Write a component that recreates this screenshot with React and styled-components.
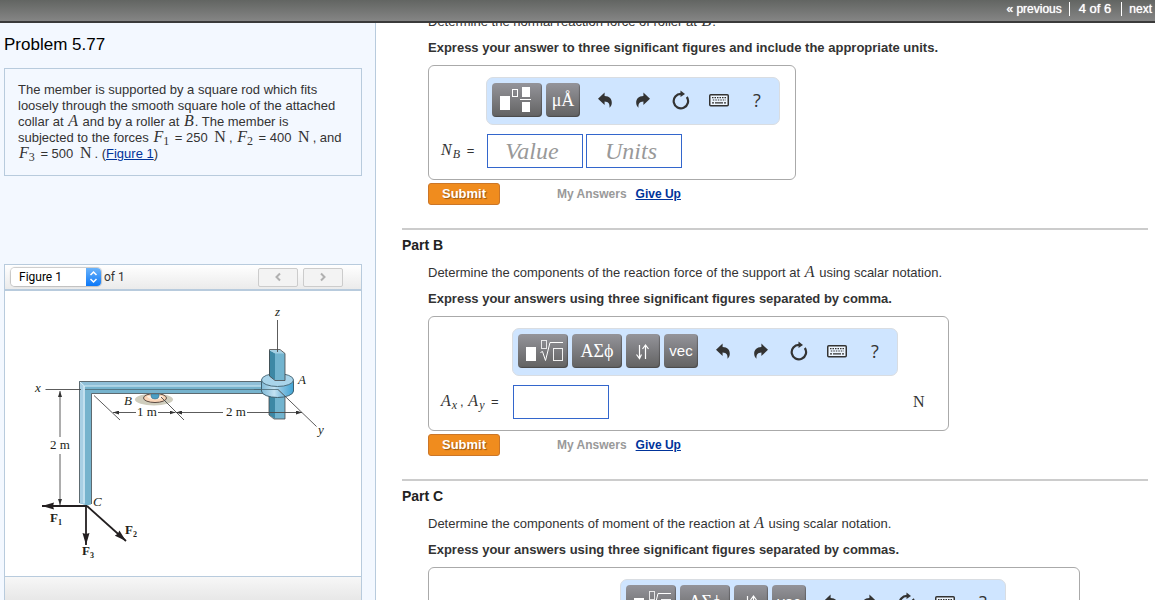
import React from "react";
import styled, { createGlobalStyle, ThemeProvider } from "styled-components";

const theme = {
  color: {
    text: "#333333",
    link: "#00339a",
    muted: "#999999",
    pane: "#f3f8ff",
    paneBorder: "#b8cbdd",
    toolbar: "#cfe5ff",
    field: "#3366cc",
    submit: "#f08c1e",
  },
  font: {
    sans: '"Liberation Sans", Arial, sans-serif',
    math: '"Liberation Serif", "Times New Roman", serif',
    control: 'Roboto, "Liberation Sans", sans-serif',
  },
};

const GlobalStyle = createGlobalStyle`
  * {
    box-sizing: border-box;
  }
  body {
    margin: 0;
    background: #ffffff;
    color: ${theme.color.text};
    font: 13px/16px ${theme.font.sans};
  }
  h1, h2, p {
    margin: 0;
  }
`;

/* Icons */

const ReplyArrow = ({ flip }) => (
  <svg width="14" height="16" viewBox="0 0 14 16" aria-hidden="true">
    <path
      fill="#333"
      transform={flip ? "matrix(-1 0 0 1 14 0)" : undefined}
      d="M0 6.8 6.6 0.6V4C11.5 4.2 14 7 13.8 11c-.1 2-1 3.700-2.300 4.800C11.900 12 10.600 9.800 6.600 9.600v3.500Z"
    />
  </svg>
);

const ResetIcon = () => (
  <svg width="18" height="20" viewBox="0 0 18 20" aria-hidden="true">
    <path
      d="M14.800 7A7.200 7.200 0 1 1 9 3.900"
      fill="none"
      stroke="#333"
      strokeWidth="2.200"
    />
    <path d="M8.500 0.500 13 3.900 8.500 7Z" fill="#333" />
  </svg>
);

const KeyboardIcon = () => (
  <svg width="20" height="14" viewBox="0 0 20 14" aria-hidden="true">
    <rect x="0.750" y="1.750" width="18.500" height="11" rx="1" fill="#eef6ff" stroke="#333" strokeWidth="1.500" />
    <g stroke="#333" strokeWidth="1.200">
      <path d="M3 4.600h14" strokeDasharray="1.500 1" />
      <path d="M3.800 7h13" strokeDasharray="1.500 1" />
      <path d="M3 9.800h2M6 9.800h8M15 9.800h2" />
    </g>
  </svg>
);

const FractionIcon = () => (
  <svg width="50" height="34" viewBox="0 0 50 34" aria-hidden="true">
    <g fill="#fff">
      <rect x="8" y="13" width="10" height="14" />
      <rect x="30" y="4" width="8" height="10" />
      <rect x="28" y="16" width="11" height="1" />
      <rect x="30" y="19" width="8" height="10" />
    </g>
    <rect x="20.500" y="6.500" width="5" height="7" fill="none" stroke="#fff" />
  </svg>
);

const RootIcon = () => (
  <svg width="50" height="34" viewBox="0 0 50 34" aria-hidden="true">
    <rect x="8" y="13" width="10" height="14" fill="#fff" />
    <g fill="none" stroke="#fff">
      <rect x="23.500" y="6.500" width="5" height="8" opacity=".8" />
      <path d="M22.500 18.500 24.500 17.500 27.500 26.500 32 8.500H45" />
      <rect x="35.500" y="14.500" width="9" height="12" opacity=".9" />
    </g>
  </svg>
);

const UpDownIcon = () => (
  <svg width="34" height="34" viewBox="0 0 34 34" aria-hidden="true">
    <g fill="none" stroke="#fff" strokeWidth="1.200">
      <path d="M13.500 11V24.500M10.500 20.500 13.500 24.500 15.500 20.500" />
      <path d="M19.500 25V11.500M16.500 15 19.500 11 22.500 15" />
    </g>
  </svg>
);

/* Math text */

const Var = styled.var`
  margin: 0 1px;
  font: italic 16px/1 ${(p) => p.theme.font.math};
  line-height: 0;

  sub {
    margin: ${(p) => (p.$numeric ? "0 1px 0 0" : "0 2px 0 1px")};
    font-size: 12px;
    line-height: 0;
    vertical-align: -3px;
    font-style: ${(p) => (p.$numeric ? "normal" : "italic")};
  }
`;

const Unit = styled.span`
  margin: 0 3px;
  font-family: ${(p) => p.theme.font.math};
  font-size: 16px;
  line-height: 0;
`;

/* Answer toolbar */

const Toolbar = styled.div`
  display: flex;
  align-items: center;
  gap: 4px;
  height: 48px;
  padding: 0 4px 2px 5px;
  background: ${(p) => p.theme.color.toolbar};
  border: 1px solid #d9dde2;
  border-radius: 7px;
`;

const TemplateButton = styled.button`
  display: flex;
  align-items: center;
  justify-content: center;
  width: ${(p) => (p.$wide ? 50 : 34)}px;
  height: 34px;
  padding: 0;
  border: 0;
  border-radius: 4px;
  background: linear-gradient(#94949a, #626262);
  box-shadow: inset -1px -1px 1px rgba(0, 0, 0, 0.25);
  color: #ffffff;
  font: ${(p) =>
    p.$math ? `18px/34px ${p.theme.font.math}` : `15px/34px ${p.theme.font.sans}`};

  svg {
    flex: none;
  }
`;

const Tools = styled.div`
  display: flex;
  margin-left: 1px;
`;

const ToolButton = styled.button`
  display: flex;
  align-items: center;
  justify-content: center;
  width: 38px;
  height: 34px;
  padding: 0 0 0 2px;
  border: 0;
  background: none;
  color: #333333;
  font: 18px/34px "Open Sans", sans-serif;
`;

const AnswerToolbar = ({ variant }) => (
  <Toolbar>
    {variant === "units" ? (
      <>
        <TemplateButton $wide aria-label="Templates">
          <FractionIcon />
        </TemplateButton>
        <TemplateButton $math>μÅ</TemplateButton>
      </>
    ) : (
      <>
        <TemplateButton $wide aria-label="Templates">
          <RootIcon />
        </TemplateButton>
        <TemplateButton $wide $math>
          ΑΣϕ
        </TemplateButton>
        <TemplateButton aria-label="Arrows">
          <UpDownIcon />
        </TemplateButton>
        <TemplateButton>vec</TemplateButton>
      </>
    )}
    <Tools>
      <ToolButton aria-label="Undo">
        <ReplyArrow />
      </ToolButton>
      <ToolButton aria-label="Redo">
        <ReplyArrow flip />
      </ToolButton>
      <ToolButton aria-label="Reset">
        <ResetIcon />
      </ToolButton>
      <ToolButton aria-label="Keyboard shortcuts">
        <KeyboardIcon />
      </ToolButton>
      <ToolButton>?</ToolButton>
    </Tools>
  </Toolbar>
);

/* Answer parts */

const Part = styled.section`
  margin: 0 7px 23px 26px;
  border-top: ${(p) => (p.$first ? "0" : "2px solid #cccccc")};
`;

const PartHeading = styled.h2`
  padding: 7px 0 12px;
  color: #222222;
  font-size: 14px;
  line-height: 16px;
`;

const PartBody = styled.div`
  padding-left: 26px;
`;

const Prompt = styled.p`
  margin-bottom: ${(p) => (p.$strong ? 9 : 10)}px;
  font-weight: ${(p) => (p.$strong ? "bold" : "normal")};
`;

const AnswerBox = styled.form`
  display: inline-grid;
  grid-template-columns: ${(p) => p.$label}px auto ${(p) => p.$unit}px;
  align-items: center;
  row-gap: 9px;
  padding: 11px 0 11px 11px;
  border: 1px solid #aaaaaa;
  border-radius: 6px;
  vertical-align: top;

  ${Toolbar} {
    grid-column: 2;
  }
`;

const FieldLabel = styled.label`
  grid-column: 1;
  white-space: nowrap;
`;

const Fields = styled.div`
  display: flex;
  gap: 3px;
  padding-left: 1px;
`;

const AnswerInput = styled.input`
  width: 96px;
  height: 34px;
  padding: 0 6px 0 0;
  border: 1px solid ${(p) => p.theme.color.field};
  border-radius: 0;
  background: #ffffff;
  text-align: center;
  font: italic 24px/32px ${(p) => p.theme.font.math};

  &::placeholder {
    color: ${(p) => p.theme.color.muted};
    opacity: 1;
  }
`;

const FieldUnit = styled.span`
  padding-left: 15px;
  font: 16px/20px ${(p) => p.theme.font.math};
`;

const SubmitRow = styled.div`
  display: flex;
  align-items: center;
  margin-top: 3px;
  font-size: 12px;
  font-weight: bold;
`;

const SubmitButton = styled.button`
  width: 72px;
  height: 22px;
  margin-right: 57px;
  padding: 0;
  border: 1px solid #cb7628;
  border-radius: 3px;
  background: ${(p) => p.theme.color.submit};
  color: #ffffff;
  font: bold 13px/18px ${(p) => p.theme.font.sans};
  text-shadow: 1px 1px 1px rgba(0, 0, 0, 0.4);
`;

const MyAnswers = styled.span`
  margin-right: 9px;
  color: ${(p) => p.theme.color.muted};
`;

const TextLink = styled.a`
  color: ${(p) => p.theme.color.link};
`;

const SubmitControls = () => (
  <SubmitRow>
    <SubmitButton>Submit</SubmitButton>
    <MyAnswers>My Answers</MyAnswers>
    <TextLink href="#give-up">Give Up</TextLink>
  </SubmitRow>
);

/* Figure */

const FigureSvg = styled.svg`
  display: block;
  width: 356px;
  height: 285px;
  font-family: ${(p) => p.theme.font.math};
  font-size: 13px;

  text {
    fill: #231f20;
  }
`;

const MemberFigure = () => (
  <FigureSvg viewBox="5 291 356 285" role="img" aria-label="Member A B C">
    <defs>
      <linearGradient id="collar" x1="0" x2="1">
        <stop offset="0" stopColor="#7fb9d6" />
        <stop offset=".4" stopColor="#c3e2f3" />
        <stop offset=".6" stopColor="#8cc4e2" />
        <stop offset="1" stopColor="#3fa3d4" />
      </linearGradient>
      <marker id="dim" viewBox="0 0 6 4" refX="6" refY="2" markerWidth="6" markerHeight="4" markerUnits="userSpaceOnUse" orient="auto-start-reverse">
        <path d="M0 0 6 2 0 4Z" fill="#333" />
      </marker>
      <marker id="force" viewBox="0 0 12 8" refX="12" refY="4" markerWidth="12" markerHeight="8" markerUnits="userSpaceOnUse" orient="auto">
        <path d="M0 0.500 12 4 0 7.500 1 4Z" fill="#231f20" />
      </marker>
    </defs>

    {/* roller B */}
    <ellipse cx="154" cy="399.500" rx="19" ry="6" fill="#cfcdbd" />
    <ellipse cx="155" cy="398" rx="11.500" ry="4.500" fill="#fbd6b8" stroke="#5a4a42" />
    <path d="M147 396a8 3.500 0 0 0 16 0Z" fill="#fff1e4" />
    <path d="M151 394v2a4 3 0 0 0 8 0v-2Z" fill="#4c9fc4" stroke="#3a6f88" strokeWidth=".6" />

    {/* lower post */}
    <path d="M269 392h6v27l-6-4Z" fill="#3d88a5" />
    <path d="M275 392h10v27h-10Z" fill="#72b4cf" />
    <path d="M269 393v22l5 4h11v-25" fill="none" stroke="#4a4a4a" strokeWidth=".8" />

    {/* arm and leg */}
    <path d="M79 381h187v13H91v110.500l-4 1-8-2.500Z" fill="#76b3cd" />
    <path d="M79.500 381.500 85 386v118.500l-5.500-1.500Z" fill="#a9cfe4" />
    <path d="M80 381.500h186v4H85Z" fill="#8fbfd8" />
    <path d="M80 382 84.500 386H266M84 386v117" fill="none" stroke="#dcf0fa" />
    <path d="M266 381.500H79.500V503M266 393.500H91.500V504" fill="none" stroke="#5d6a70" />
    <path d="M85 389.500h193" stroke="#4d6873" strokeWidth=".8" />

    {/* collar A */}
    <path d="M261.500 380v11a16 6.500 0 0 0 32 0v-11Z" fill="url(#collar)" stroke="#3f5f6e" />
    <ellipse cx="277.500" cy="380" rx="16" ry="6.500" fill="#a9d4ea" stroke="#4f6f7e" />
    <path d="M254 389.500h24" stroke="#4d6873" strokeWidth=".8" />

    {/* upper post */}
    <path d="M269 350l6 3v27l-6-4Z" fill="#3d88a5" />
    <path d="M275 353h10v27h-10Z" fill="#72b4cf" />
    <path d="M269 350h11l5 3.500h-10Z" fill="#a3d0e4" />
    <path d="M269.500 376v-26.500H280l5 4v27h-10Z" fill="none" stroke="#444" strokeWidth=".8" />

    {/* axes and dimensions */}
    <g fill="none" stroke="#4a4a4a" strokeWidth=".9">
      <path d="M277.500 320v32M45.500 389.500H81M278 389.500 316.500 426.500" />
      <path d="M60 437V391" markerEnd="url(#dim)" />
      <path d="M60 454v51" markerEnd="url(#dim)" />
      <path d="M94 395.500 120 420M161 397 184 420" />
      <path d="M136 412.500h-23" markerEnd="url(#dim)" />
      <path d="M158 412.500h17.500" markerEnd="url(#dim)" />
      <path d="M223 412.500h-47" markerEnd="url(#dim)" />
      <path d="M247 412.500h55" markerEnd="url(#dim)" />
    </g>

    {/* forces */}
    <g fill="none" stroke="#231f20" strokeWidth="1.800">
      <path d="M87 506H42" markerEnd="url(#force)" />
      <path d="M86 506v39" markerEnd="url(#force)" />
      <path d="M87 506 126 541" markerEnd="url(#force)" />
    </g>

    <g fontStyle="italic">
      <text x="35" y="392">x</text>
      <text x="318" y="434">y</text>
      <text x="275" y="316">z</text>
      <text x="298" y="384">A</text>
      <text x="124" y="405">B</text>
      <text x="93" y="506">C</text>
    </g>
    <text x="50" y="449">2 m</text>
    <text x="137" y="416">1 m</text>
    <text x="226" y="416">2 m</text>
    <g fontWeight="bold">
      <text x="50" y="522">F<tspan fontSize="8" dy="3">1</tspan></text>
      <text x="125" y="534">F<tspan fontSize="8" dy="3">2</tspan></text>
      <text x="82" y="555">F<tspan fontSize="8" dy="3">3</tspan></text>
    </g>
  </FigureSvg>
);

const Chevron = ({ left }) => (
  <svg width="8" height="10" viewBox="0 0 8 10" aria-hidden="true">
    <path d={left ? "M6 1.500 2.500 5 6 8.500" : "M2 1.500 5.500 5 2 8.500"} fill="none" stroke="#b0b0b0" strokeWidth="2" />
  </svg>
);

/* Page */

const App = () => (
  <ThemeProvider theme={theme}>
    <GlobalStyle />
    <S.Page>
      <S.Header>
        <S.HeaderLink href="#previous">« previous</S.HeaderLink>
        <S.HeaderCount>4 of 6</S.HeaderCount>
        <S.HeaderLink href="#next">next</S.HeaderLink>
      </S.Header>

      <S.Columns>
        <S.Side>
          <S.Title>Problem 5.77</S.Title>
          <S.Statement>
            The member is supported by a square rod which fits loosely through
            the smooth square hole of the attached collar at <Var>A</Var> and by
            a roller at <Var>B</Var>. The member is subjected to the forces{" "}
            <Var $numeric>F<sub>1</sub></Var> = 250 <Unit>N</Unit>,{" "}
            <Var $numeric>F<sub>2</sub></Var> = 400 <Unit>N</Unit>, and{" "}
            <Var $numeric>F<sub>3</sub></Var> = 500 <Unit>N</Unit>. (
            <TextLink href="#figure">Figure 1</TextLink>)
          </S.Statement>

          <S.FigurePanel id="figure">
            <S.FigureBar>
              <S.SelectWrap>
                <S.Select aria-label="Figure" defaultValue="1">
                  <option value="1">Figure 1</option>
                </S.Select>
                <svg width="15" height="18" viewBox="0 0 15 18" aria-hidden="true">
                  <path d="M4.500 7 7.500 4 10.500 7M4.500 11 7.500 14 10.500 11" fill="none" stroke="#fff" strokeWidth="1.500" />
                </svg>
              </S.SelectWrap>
              <S.FigureCount>of 1</S.FigureCount>
              <S.PagerButton disabled aria-label="Previous figure">
                <Chevron left />
              </S.PagerButton>
              <S.PagerButton disabled aria-label="Next figure">
                <Chevron />
              </S.PagerButton>
            </S.FigureBar>
            <MemberFigure />
            <S.FigureFooter />
          </S.FigurePanel>
        </S.Side>

        <S.Main>
          <Part $first>
            <PartBody>
              <Prompt>
                Determine the normal reaction force of roller at <Var>B</Var>.
              </Prompt>
              <Prompt $strong>
                Express your answer to three significant figures and include the
                appropriate units.
              </Prompt>
              <AnswerBox $label={46} $unit={15}>
                <AnswerToolbar variant="units" />
                <FieldLabel htmlFor="nb">
                  <Var>N<sub>B</sub></Var> =
                </FieldLabel>
                <Fields>
                  <AnswerInput id="nb" placeholder="Value" />
                  <AnswerInput aria-label="Units" placeholder="Units" />
                </Fields>
              </AnswerBox>
              <SubmitControls />
            </PartBody>
          </Part>

          <Part>
            <PartHeading>Part B</PartHeading>
            <PartBody>
              <Prompt>
                Determine the components of the reaction force of the support at{" "}
                <Var>A</Var> using scalar notation.
              </Prompt>
              <Prompt $strong>
                Express your answers using three significant figures separated
                by comma.
              </Prompt>
              <AnswerBox $label={72} $unit={50}>
                <AnswerToolbar />
                <FieldLabel htmlFor="axy">
                  <Var>A<sub>x</sub></Var>, <Var>A<sub>y</sub></Var> =
                </FieldLabel>
                <Fields>
                  <AnswerInput id="axy" />
                </Fields>
                <FieldUnit>N</FieldUnit>
              </AnswerBox>
              <SubmitControls />
            </PartBody>
          </Part>

          <Part>
            <PartHeading>Part C</PartHeading>
            <PartBody>
              <Prompt>
                Determine the components of moment of the reaction at{" "}
                <Var>A</Var> using scalar notation.
              </Prompt>
              <Prompt $strong>
                Express your answers using three significant figures separated
                by commas.
              </Prompt>
              <AnswerBox $label={180} $unit={73}>
                <AnswerToolbar />
              </AnswerBox>
            </PartBody>
          </Part>
        </S.Main>
      </S.Columns>
    </S.Page>
  </ThemeProvider>
);

const S = {};

S.Page = styled.div`
  display: flex;
  flex-direction: column;
  height: 100vh;
  overflow: hidden;
`;

S.Header = styled.header`
  flex: none;
  display: flex;
  justify-content: flex-end;
  height: 23px;
  padding: 2px 3px 0 0;
  background: linear-gradient(#626562, #858585);
  border-bottom: 2px solid #3a3a3a;
  color: #ffffff;
  font-size: 12px;
  line-height: 14px;
  white-space: nowrap;

  > * + * {
    margin-left: 7px;
    padding-left: 7px;
    border-left: 1px solid #ffffff;
  }
  > * {
    height: 14px;
    text-shadow: 0 0 1px #ffffff;
  }
`;

S.HeaderLink = styled.a`
  color: inherit;
  text-decoration: none;
`;

S.HeaderCount = styled.span`
  padding: 0 3px 0 2px;
  font-size: 13px;

  ${S.HeaderLink} + & {
    padding-left: 9px;
  }
`;

S.Columns = styled.div`
  flex: 1;
  display: flex;
  min-height: 0;
`;

S.Side = styled.aside`
  flex: none;
  width: 376px;
  padding: 12px 13px 0 4px;
  overflow: hidden;
  background: ${(p) => p.theme.color.pane};
  border-right: 1px solid ${(p) => p.theme.color.paneBorder};
`;

S.Title = styled.h1`
  margin-bottom: 13px;
  color: #000000;
  font-size: 17px;
  font-weight: normal;
  line-height: 20px;
`;

S.Statement = styled.p`
  margin-bottom: 88px;
  padding: 13px 15px 13px 13px;
  border: 1px solid ${(p) => p.theme.color.paneBorder};
`;

S.FigurePanel = styled.div`
  background: #ffffff;
  border: 1px solid ${(p) => p.theme.color.paneBorder};
`;

S.FigureBar = styled.div`
  display: flex;
  align-items: center;
  height: 26px;
  padding: 0 18px 0 6px;
  background: linear-gradient(#ffffff, #ebebeb);
  border-bottom: 2px solid ${(p) => p.theme.color.paneBorder};
  font: 12px/16px ${(p) => p.theme.font.control};
`;

S.SelectWrap = styled.div`
  position: relative;
  width: 90px;
  height: 18px;
  border-radius: 4px;
  box-shadow: 0 0 1px 1px rgba(0, 0, 0, 0.2);
  overflow: hidden;

  svg {
    position: absolute;
    top: 0;
    right: 0;
    background: linear-gradient(#6bb3fa, #0b78f8);
    pointer-events: none;
  }
`;

S.Select = styled.select`
  appearance: none;
  display: block;
  width: 100%;
  height: 18px;
  padding: 0 18px 0 8px;
  border: 0;
  background: #ffffff;
  color: #000000;
  font: 12px/18px ${(p) => p.theme.font.control};
`;

S.FigureCount = styled.span`
  margin: 0 auto 0 3px;
`;

S.PagerButton = styled.button`
  display: flex;
  align-items: center;
  justify-content: center;
  width: 40px;
  height: 19px;
  margin-left: 5px;
  padding: 0;
  border: 1px solid #cccccc;
  border-radius: 2px;
  background: #f3f3f3;
`;

S.FigureFooter = styled.div`
  height: 26px;
  border-top: 1px solid ${(p) => p.theme.color.paneBorder};
  background: linear-gradient(#f7f7f7, #e6e6e6);
`;

S.Main = styled.main`
  flex: 1;
  min-width: 0;
  overflow: hidden;

  /* the pane is scrolled just past the first prompt */
  > :first-child {
    margin-top: -9px;
  }
`;

export default App;
